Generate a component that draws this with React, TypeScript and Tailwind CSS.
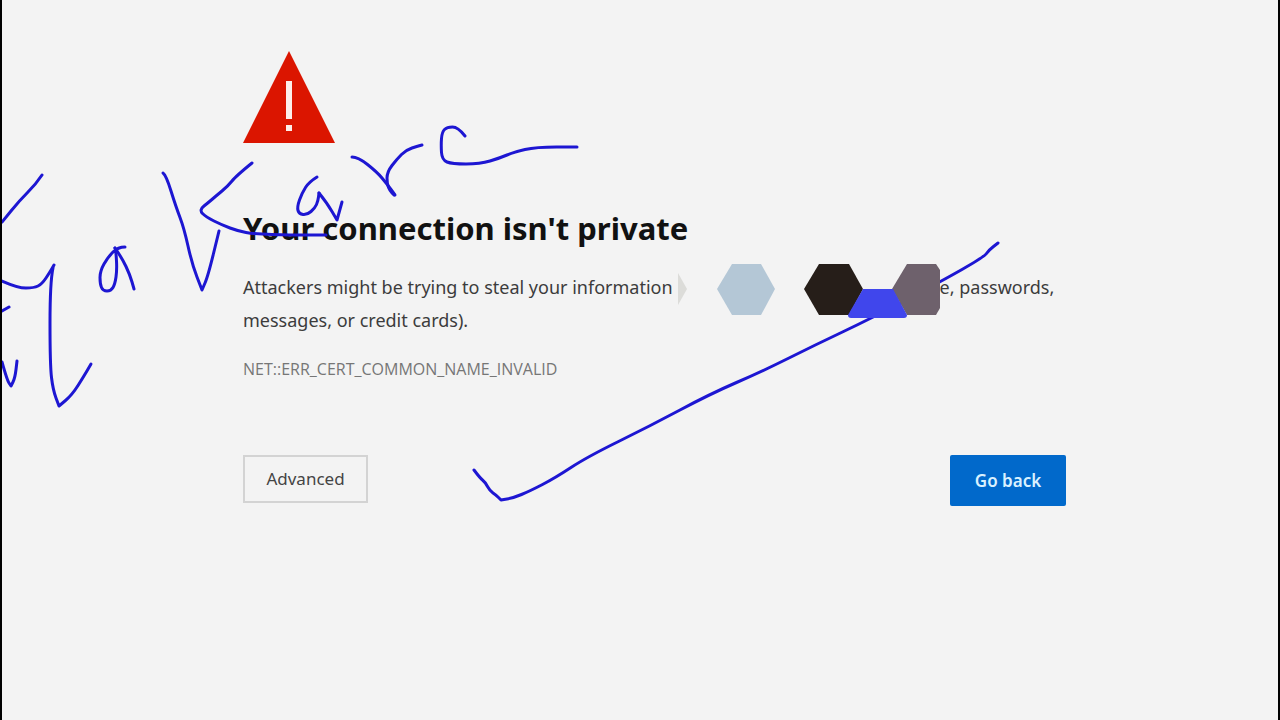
interface Stroke {
  id: string
  points: number[][]
}

// a point listed twice keeps its corner sharp
const strokes: Stroke[] = [
  { id: 'edge-top', points: [[42, 175], [36, 184], [20, 200], [2, 222]] },
  { id: 'y-bowl', points: [[2, 281], [18, 288], [34, 288], [42, 284], [50, 272], [54, 265]] },
  { id: 'y-tail', points: [[53, 268], [50, 282], [50, 365], [53, 390], [59, 406], [59, 406], [72, 395], [84, 376], [91, 364]] },
  { id: 'edge-dash', points: [[2, 311], [9, 307]] },
  { id: 'edge-v', points: [[2, 362], [7, 380], [11, 386], [11, 386], [15, 378], [17, 361]] },
  { id: 'a-bowl', points: [[125, 247], [118, 247], [108, 257], [100, 271], [100, 284], [103, 291], [111, 291], [115, 284], [117, 270], [116, 252], [115, 248]] },
  { id: 'a-leg', points: [[115, 248], [122, 258], [130, 275], [134, 289]] },
  { id: 'k-stem', points: [[163, 173], [166, 175], [176, 207], [184, 228], [192, 264], [202, 290], [202, 290], [208, 276], [219, 231]] },
  { id: 'k-arm', points: [[252, 163], [236, 176], [228, 186], [216, 196], [209, 202], [199, 210], [206, 217], [222, 225], [238, 231], [254, 234], [290, 235], [326, 235]] },
  { id: 'a2-bowl', points: [[317, 177], [309, 182], [302, 193], [297, 207], [299, 214], [307, 215], [315, 208], [318, 201], [319, 193]] },
  { id: 'a2-leg', points: [[319, 193], [327, 203], [337, 220], [337, 220], [342, 202]] },
  { id: 'r-stem', points: [[352, 157], [358, 157], [377, 172], [387, 184], [395, 195]] },
  { id: 'r-arm', points: [[422, 145], [418, 146], [406, 150], [397, 159], [387, 172], [387, 184], [390, 191], [394, 195]] },
  { id: 'c', points: [[465, 136], [458, 127], [447, 127], [442, 132], [441, 145], [442, 160], [452, 164], [480, 164], [500, 158], [514, 152], [536, 147], [577, 147]] },
  { id: 'tick', points: [[474, 470], [480, 478], [485, 482], [490, 491], [496, 495], [501, 500], [501, 500], [513, 498], [530, 491], [555, 478], [587, 457], [650, 426], [710, 394], [763, 371], [815, 345], [872, 318], [940, 282], [984, 257], [989, 250], [998, 243]] },
]

// rounds each corner by curving between segment midpoints
const toPath = (points: number[][]) => {
  const last = points[points.length - 1]
  const curves = points.slice(1, -1).map(([x, y], i) => {
    const [nextX, nextY] = points[i + 2]
    return `Q${x} ${y} ${(x + nextX) / 2} ${(y + nextY) / 2}`
  })
  return `M${points[0].join(' ')}${curves.join('')}L${last.join(' ')}`
}

const WarningIcon = () => (
  <svg viewBox="0 0 92 93" className="w-[92px] h-[93px]" role="img" aria-label="Warning">
    <polygon points="46,0 92,92 0,92" fill="#db1500" />
    <rect x="43" y="30" width="6" height="38" fill="#fdeeea" />
    <rect x="43" y="74" width="6" height="6" fill="#fdeeea" />
  </svg>
)

const Shapes = () => (
  <span className="relative z-20 inline-block w-[267px] h-5 align-middle" aria-hidden="true">
    <svg viewBox="673 259 267 60" className="absolute left-0 -top-5 w-[267px] h-[60px]">
      <polygon points="678,273 687,289 678,305" fill="#dcdcd9" />
      <polygon points="717,289 732,264 761,264 775,289 761,315 732,315" fill="#b4c7d6" />
      <polygon points="804,289 819,264 849,264 863,289 849,315 819,315" fill="#261e19" />
      <polygon points="892,289 907,264 936,264 940,270 940,308 936,315 907,315" fill="#6e616c" />
      <path d="M863 289H893L907 315Q907 318 904 318H851Q848 318 848 315Z" fill="#4046ec" />
    </svg>
  </span>
)

const Ink = () => (
  <svg
    viewBox="0 0 1280 720"
    className="pointer-events-none absolute top-0 -left-0.5 z-10 w-[1280px] h-[720px] max-w-none"
    fill="none"
    stroke="#1d16d2"
    strokeWidth="3"
    strokeLinecap="round"
    strokeLinejoin="round"
    aria-hidden="true"
  >
    {strokes.map((stroke) => (
      <path key={stroke.id} d={toPath(stroke.points)} />
    ))}
  </svg>
)

export default function App() {
  return (
    <div className="relative min-h-screen overflow-hidden border-x-2 border-black bg-[#f3f3f3] font-['Noto_Sans','Open_Sans',sans-serif]">
      <main className="pt-[51px] pl-[241px] pr-[212px]">
        <WarningIcon />
        <h1 className="mt-16 text-[31px] leading-10 font-bold text-[#111111]">
          Your connection isn't private
        </h1>
        <p className="mt-[23px] text-[18px] leading-[33px] text-[#3c3c3c]">
          <span className="whitespace-nowrap">
            Attackers might be trying to steal your information
            <Shapes />
            e, passwords,
          </span>{' '}
          messages, or credit cards).
        </p>
        <p className="mt-4 font-['Open_Sans',sans-serif] text-[16px] leading-8 text-[#767676]">
          NET::ERR_CERT_COMMON_NAME_INVALID
        </p>
        <div className="mt-[70px] flex items-start justify-between">
          <button
            type="button"
            className="h-12 w-[125px] border-2 border-[#d3d3d3] text-[17px] text-[#444444]"
          >
            Advanced
          </button>
          <button
            type="button"
            className="h-[51px] w-[116px] rounded-xs bg-[#0169cb] text-[17px] font-semibold text-[#d9f1ff]"
          >
            Go back
          </button>
        </div>
      </main>
      <Ink />
    </div>
  )
}
